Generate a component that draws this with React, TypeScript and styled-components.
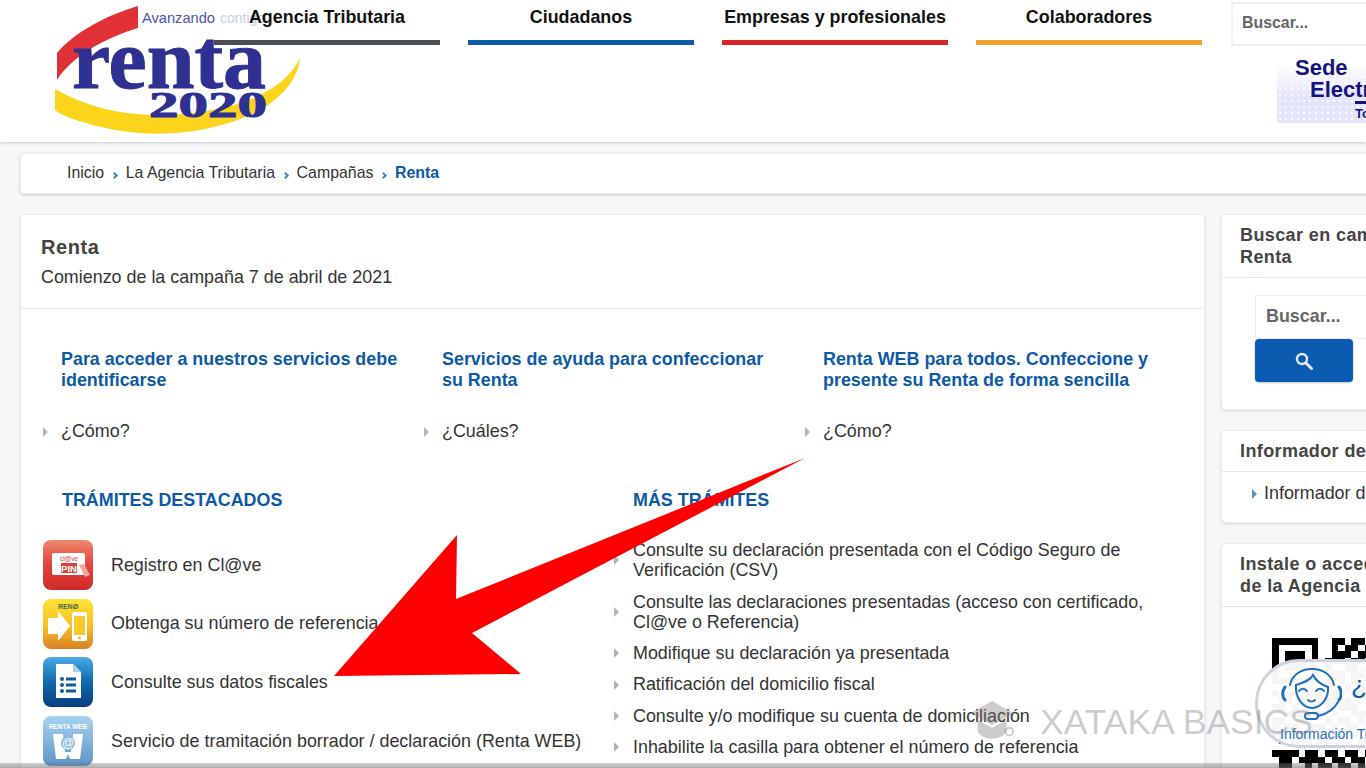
import React from "react";
import styled, { createGlobalStyle } from "styled-components";

const GlobalStyle = createGlobalStyle`
  html, body { margin: 0; padding: 0; background: #f6f7f8; }
  body { font-family: "Liberation Sans", Arial, sans-serif; color: #333; }
  * { box-sizing: border-box; }
`;

const Page = styled.div`
  position: relative;
  width: 1366px;
  height: 768px;
  overflow: hidden;
  background: #f6f7f8;
`;

/* header */
const Header = styled.header`
  display: flex;
  align-items: flex-start;
  height: 142px;
  background: #fff;
  box-shadow: 0 1px 3px rgba(0, 0, 0, 0.2);
`;

const LogoSlot = styled.div`
  flex: none;
  width: 246px;
  margin: 5px -87px 0 55px;
`;

const Nav = styled.nav`
  position: relative;
  display: flex;
  flex: none;
  gap: 28px;
`;

const NavItem = styled.a<{ $color: string }>`
  display: block;
  width: 226px;
  height: 45px;
  padding-top: 7px;
  border-bottom: 5px solid ${(p) => p.$color};
  color: #111;
  font-size: 17.9px;
  font-weight: bold;
  line-height: 21px;
  text-align: center;
`;

const HeaderRight = styled.div`
  flex: none;
  width: 300px;
  margin-left: 29px;
  padding-top: 2px;
`;

const TopSearch = styled.div`
  height: 44px;
  padding-left: 9px;
  border: 2px solid #f0f0f0;
  color: #666;
  font-size: 15.9px;
  font-weight: bold;
  line-height: 38px;
`;

const SedeBadge = styled.div`
  width: 200px;
  height: 67px;
  margin: 10px 0 0 46px;
  padding: 1px 0 0 18px;
  border-radius: 4px;
  background-color: #e4e4fb;
  background-image: linear-gradient(#fff 12%, rgba(255, 255, 255, 0) 62%),
    radial-gradient(circle, #fbfbff 1.3px, transparent 1.5px);
  background-size: 100% 100%, 6px 6px;
  color: #14147f;
  font-weight: bold;
`;

const SedeLine = styled.div<{ $indent: number; $size: number }>`
  padding-left: ${(p) => p.$indent}px;
  font-size: ${(p) => p.$size}px;
  line-height: ${(p) => p.$size}px;
  white-space: nowrap;
`;

const SedeRule = styled.div`
  width: 40px;
  height: 3px;
  margin: 0 0 3px 60px;
  background: #14147f;
`;

/* breadcrumb */
const Crumbs = styled.div`
  display: flex;
  align-items: center;
  gap: 7.8px;
  width: 1400px;
  height: 41px;
  margin: 11px 0 0 20px;
  padding: 0 0 2px 46px;
  border: 1px solid #eee;
  border-radius: 4px;
  background: #fff;
  box-shadow: 0 1px 3px rgba(0, 0, 0, 0.2);
  font-size: 15.9px;
`;

const CrumbSep = styled.span`
  width: 5px;
  height: 5px;
  margin: 5px 1px 0 0;
  border-top: 2px solid #3b8ec2;
  border-right: 2px solid #3b8ec2;
  transform: rotate(45deg);
`;

const CrumbCurrent = styled.b`
  color: #0b5aa5;
`;

/* main */
const Columns = styled.div`
  display: flex;
  gap: 16px;
  width: 1600px;
  margin: 20px 0 0 20px;
  align-items: flex-start;
`;

const Card = styled.section`
  border: 1px solid #ececec;
  border-radius: 5px;
  background: #fff;
  box-shadow: 0 1px 3px rgba(0, 0, 0, 0.12);
`;

const MainCard = styled(Card)`
  flex: none;
  width: 1185px;
  height: 620px;
`;

const MainHead = styled.div`
  height: 94px;
  padding: 20px 20px 0;
  border-bottom: 1px solid #e6e6e6;
`;

const MainTitle = styled.h1`
  margin: 0;
  color: #444;
  font-size: 20px;
  letter-spacing: 0.6px;
  line-height: 24px;
`;

const MainSub = styled.p`
  margin: 7px 0 0;
  font-size: 17.9px;
  line-height: 22px;
`;

const Promos = styled.div`
  display: grid;
  grid-template-columns: repeat(3, 381px);
  padding: 40px 0 0 40px;
`;

const PromoTitle = styled.h2`
  margin: 0;
  width: 345px;
  height: 62px;
  color: #0b5aa5;
  font-size: 17.9px;
  line-height: 21px;
`;

const PromoLink = styled.a`
  position: relative;
  display: block;
  margin-top: 10px;
  font-size: 17.9px;
  line-height: 21px;
`;

const Arrow = styled.span<{ $left: number; $color?: string }>`
  position: absolute;
  left: ${(p) => p.$left}px;
  top: 50%;
  margin-top: -5px;
  border-left: 5px solid ${(p) => p.$color ?? "#aeb4b8"};
  border-top: 5px solid transparent;
  border-bottom: 5px solid transparent;
`;

const Lower = styled.div`
  display: flex;
  padding: 48px 0 0 22px;
`;

const LeftCol = styled.div`
  flex: none;
  width: 590px;
`;

const RightCol = styled.div`
  flex: none;
  width: 540px;
`;

const SectionTitle = styled.h3`
  margin: 0;
  padding-left: 19px;
  color: #0b5aa5;
  font-size: 17.9px;
  line-height: 21px;
`;

const RightTitle = styled(SectionTitle)`
  padding-left: 0;
`;

const TaskList = styled.div`
  display: flex;
  flex-direction: column;
  gap: 8.7px;
  margin-top: 29px;
`;

const Task = styled.a`
  display: flex;
  align-items: center;
  gap: 18px;
  height: 50px;
  font-size: 17.9px;
  white-space: nowrap;
`;

const MoreList = styled.div`
  display: flex;
  flex-direction: column;
  gap: 10.8px;
  margin-top: 29px;
`;

const MoreItem = styled.a`
  position: relative;
  display: block;
  font-size: 17.9px;
  line-height: 20.4px;
`;

/* sidebar */
const Sidebar = styled.aside`
  display: flex;
  flex: none;
  flex-direction: column;
  gap: 20px;
  width: 300px;
`;

const SideHead = styled.div`
  padding: 9px 18px 9px;
  border-bottom: 1px solid #e6e6e6;
  color: #444;
  font-size: 18px;
  font-weight: bold;
  letter-spacing: 0.4px;
  line-height: 22px;
  white-space: nowrap;
`;

const SideSearch = styled.div`
  height: 131px;
  padding: 17px 0 0 33px;
`;

const SideInput = styled.div`
  height: 44px;
  padding-left: 10px;
  border: 1px solid #eee;
  color: #666;
  font-size: 17.9px;
  font-weight: bold;
  line-height: 40px;
`;

const SideButton = styled.div`
  display: flex;
  align-items: center;
  justify-content: center;
  width: 98px;
  height: 43px;
  border-radius: 4px;
  background: #0b5cb0;
  box-shadow: 0 1px 2px rgba(0, 0, 0, 0.25);
`;

const SideLink = styled.a`
  position: relative;
  display: block;
  height: 21px;
  margin: 11px 0 18px 42px;
  font-size: 17.9px;
  line-height: 21px;
  white-space: nowrap;
`;

const QrCard = styled(Card)`
  height: 260px;
`;

const QrBox = styled.div`
  padding: 31px 0 0 50px;
`;

/* things lying over the page */
const ArrowOverlay = styled.svg`
  position: absolute;
  left: 0;
  top: 0;
`;

const HelpBubble = styled.div`
  position: absolute;
  left: 1255px;
  top: 659px;
  width: 200px;
  height: 89px;
  padding: 6px 0 0 22px;
  border: 3px solid #cdd3de;
  border-radius: 44px;
  background: rgba(255, 255, 255, 0.96);
`;

const HelpTop = styled.div`
  display: flex;
  gap: 9px;
  height: 52px;
  color: #0b5cb0;
  font-size: 26px;
  line-height: 34px;
`;

const HelpLabel = styled.div`
  margin: 6px 0 0 0;
  color: #1f6fbe;
  font-size: 14px;
  line-height: 16px;
  white-space: nowrap;
`;

const Watermark = styled.div`
  position: absolute;
  left: 970px;
  top: 700px;
  display: flex;
  align-items: center;
  gap: 24px;
  color: rgba(120, 120, 120, 0.38);
  font-size: 35.500px;
  line-height: 42px;
  white-space: nowrap;
`;

const BottomEdge = styled.div`
  position: absolute;
  left: 0;
  right: 0;
  bottom: 0;
  height: 5px;
  background: linear-gradient(rgba(120, 120, 120, 0.35), rgba(120, 120, 120, 0.6));
`;

const RentaLogo = () => (
  <svg width="246" height="130" viewBox="55 5 246 130">
    <path d="M138 6 L138 28 C105 38 72 56 57 80 L57 53 C75 32 105 16 138 6 Z" fill="#e03236" />
    <path d="M55 89 C85 106 120 115 155 115 C215 115 280 100 300 58 C298 85 270 112 225 124 C190 135 150 136 115 130 C90 125 65 118 55 110 Z" fill="#fdd41c" />
    <text x="72" y="88" fontFamily="Liberation Serif" fontWeight="bold" fontSize="84" fill="#2e3192" stroke="#2e3192" strokeWidth="1" textLength="194" lengthAdjust="spacingAndGlyphs">renta</text>
    <text x="149" y="117" fontFamily="Liberation Serif" fontWeight="bold" fontSize="36" fill="#2e3192" stroke="#2e3192" strokeWidth="1" textLength="118" lengthAdjust="spacingAndGlyphs">2020</text>
    <text x="142" y="23" fontFamily="Liberation Sans" fontSize="14" fill="#4a55ad" textLength="73" lengthAdjust="spacingAndGlyphs">Avanzando</text>
    <text x="220" y="23" fontFamily="Liberation Sans" fontSize="14" fill="#c9cbec">contigo</text>
  </svg>
);

const SearchGlyph = () => (
  <svg width="18" height="18" viewBox="0 0 18 18" fill="none" stroke="#dfeaf6" strokeWidth="2.4">
    <circle cx="7" cy="7" r="5" />
    <path d="M11 11 L16.5 16.5" strokeWidth="3" strokeLinecap="round" />
  </svg>
);

const ClavePinIcon = () => (
  <svg width="50" height="50" viewBox="0 0 50 50">
    <defs>
      <linearGradient id="redGrad" x1="0" y1="0" x2="0" y2="1">
        <stop offset="0" stopColor="#ee8a6c" />
        <stop offset="0.5" stopColor="#e2433a" />
        <stop offset="1" stopColor="#cf2a2a" />
      </linearGradient>
    </defs>
    <rect width="50" height="50" rx="8" fill="url(#redGrad)" />
    <rect x="9" y="13" width="33" height="22" rx="2" fill="#fff" />
    <rect x="18" y="23" width="16" height="10" fill="#d8403a" />
    <text x="26" y="21" textAnchor="middle" fontFamily="Liberation Sans" fontSize="6.500" fill="#d8403a">cl@ve</text>
    <text x="26" y="32" textAnchor="middle" fontFamily="Liberation Sans" fontWeight="bold" fontSize="9.500" fill="#fff">PIN</text>
    <path d="M36 25 L41 24 L47 35 L42 37 Z" fill="#e9a99d" />
  </svg>
);

const RenoIcon = () => (
  <svg width="50" height="50" viewBox="0 0 50 50">
    <defs>
      <linearGradient id="yellowGrad" x1="0" y1="0" x2="0" y2="1">
        <stop offset="0" stopColor="#fde233" />
        <stop offset="0.55" stopColor="#f8c023" />
        <stop offset="1" stopColor="#d97f27" />
      </linearGradient>
    </defs>
    <rect width="50" height="50" rx="8" fill="url(#yellowGrad)" />
    <text x="25" y="10" textAnchor="middle" fontFamily="Liberation Sans" fontWeight="bold" fontSize="7" fill="#3f6f4a">RENØ</text>
    <path d="M5 19 H15 V12 L27 27 L15 42 V35 H5 Z" fill="#fff" />
    <rect x="29" y="13" width="15" height="29" rx="2" fill="#fff" />
    <rect x="31" y="17" width="11" height="19" fill="#fbc82b" />
    <circle cx="36.500" cy="39" r="1.300" fill="#e6a92a" />
  </svg>
);

const DatosIcon = () => (
  <svg width="50" height="50" viewBox="0 0 50 50">
    <defs>
      <linearGradient id="blueGrad" x1="0" y1="0" x2="0" y2="1">
        <stop offset="0" stopColor="#4aa9e6" />
        <stop offset="0.5" stopColor="#0f69ae" />
        <stop offset="1" stopColor="#083f7e" />
      </linearGradient>
    </defs>
    <rect width="50" height="50" rx="8" fill="url(#blueGrad)" />
    <path d="M13 7 H30 L38 15 V41 H13 Z" fill="#fff" />
    <path d="M30 7 L38 15 H30 Z" fill="#a9cfe9" />
    <g fill="#0d5c9f">
      <circle cx="19" cy="22" r="2" />
      <circle cx="19" cy="28" r="2" />
      <circle cx="19" cy="34" r="2" />
      <rect x="23" y="20.500" width="10" height="3" />
      <rect x="23" y="26.500" width="10" height="3" />
      <rect x="23" y="32.500" width="10" height="3" />
    </g>
  </svg>
);

const RentaWebIcon = () => (
  <svg width="50" height="50" viewBox="0 0 50 50">
    <defs>
      <linearGradient id="skyGrad" x1="0" y1="0" x2="0" y2="1">
        <stop offset="0" stopColor="#a6d2ee" />
        <stop offset="1" stopColor="#5b94c9" />
      </linearGradient>
    </defs>
    <rect width="50" height="50" rx="8" fill="url(#skyGrad)" />
    <text x="25" y="13" textAnchor="middle" fontFamily="Liberation Sans" fontWeight="bold" fontSize="6.500" fill="#fff">RENTA WEB</text>
    <path d="M10 18 H20 L22 36 H28 L30 18 H40 L37 43 H27 L25 38 L23 43 H13 Z" fill="#fff" />
    <circle cx="25" cy="27" r="7" fill="#8fbde0" />
    <text x="25" y="31" textAnchor="middle" fontFamily="Liberation Sans" fontSize="12" fill="#fff">@</text>
  </svg>
);

// modules of the QR code, rows top to bottom
const qrRows = [
  "1111111001101101",
  "1000001001011011",
  "1011101001110110",
  "1011101011101101",
  "1011101010011010",
  "1000001001101101",
  "1111111010101011",
  "0000000010010110",
  "1011011001101101",
  "0110100111010010",
  "1101011010111001",
  "0011101101001110",
  "1100110010110101",
  "1011001101011010",
  "1110110011101001",
  "0101010110010111",
  "0000000000000000",
  "1111011011011010",
  "0110111101101101",
  "0110010110110100",
];

const QrCode = () => (
  <svg width="106" height="132" viewBox="0 0 16 20" shapeRendering="crispEdges">
    {qrRows.map((row, y) =>
      row.split("").map((cell, x) =>
        cell === "1" ? <rect key={`${x}-${y}`} x={x} y={y} width="1" height="1" fill="#000" /> : null
      )
    )}
  </svg>
);

const AgentIcon = () => (
  <svg width="62" height="52" viewBox="0 0 62 52" fill="none" stroke="#1f6fbe" strokeWidth="2" strokeLinecap="round">
    <path d="M10 17 C12 7 21 1 32 1 C43 1 52 7 54 17" />
    <path d="M16 17 C22 15 30 13 33 7 C36 13 42 17 48 19" />
    <path d="M16 17 C15 30 23 40 32 40 C41 40 49 30 48 19" />
    <path d="M19 23 C21 20 25 20 27 23 M36 23 C38 20 42 20 44 23" />
    <path d="M28 32 C30 34 33 34 35 32" />
    <path d="M5 19 C2 23 2 29 5 32" strokeWidth="3" />
    <path d="M59 19 C62 23 62 29 59 32" strokeWidth="3" />
    <path d="M58 34 C54 42 46 46 38 48" />
    <rect x="25" y="45" width="13" height="6" rx="3" />
  </svg>
);

const GradCapIcon = () => (
  <svg width="46" height="44" viewBox="0 0 48 44" fill="rgba(120,120,120,0.38)">
    <path d="M23 0 L46 13 L23 25 L0 13 Z" />
    <path d="M8 20 L23 28 L38 20 V32 C32 42 14 42 8 32 Z" />
    <circle cx="41" cy="32" r="4" fill="none" stroke="rgba(120,120,120,0.38)" strokeWidth="2" />
  </svg>
);

const breadcrumbs = ["Inicio", "La Agencia Tributaria", "Campañas"];

const promos = [
  { title: "Para acceder a nuestros servicios debe identificarse", link: "¿Cómo?" },
  { title: "Servicios de ayuda para confeccionar su Renta", link: "¿Cuáles?" },
  { title: "Renta WEB para todos. Confeccione y presente su Renta de forma sencilla", link: "¿Cómo?" },
];

const moreTasks = [
  "Consulte su declaración presentada con el Código Seguro de Verificación (CSV)",
  "Consulte las declaraciones presentadas (acceso con certificado, Cl@ve o Referencia)",
  "Modifique su declaración ya presentada",
  "Ratificación del domicilio fiscal",
  "Consulte y/o modifique su cuenta de domiciliación",
  "Inhabilite la casilla para obtener el número de referencia",
];

export default function App() {
  return (
    <Page>
      <GlobalStyle />
      <Header>
        <LogoSlot>
          <RentaLogo />
        </LogoSlot>
        <Nav>
          <NavItem $color="#4a4f54">Agencia Tributaria</NavItem>
          <NavItem $color="#0b5aa5">Ciudadanos</NavItem>
          <NavItem $color="#d9252a">Empresas y profesionales</NavItem>
          <NavItem $color="#f0a12b">Colaboradores</NavItem>
        </Nav>
        <HeaderRight>
          <TopSearch>Buscar...</TopSearch>
          <SedeBadge>
            <SedeLine $indent={0} $size={22}>Sede</SedeLine>
            <SedeLine $indent={15} $size={22}>Electrónica</SedeLine>
            <SedeRule />
            <SedeLine $indent={60} $size={13}>Todos</SedeLine>
          </SedeBadge>
        </HeaderRight>
      </Header>

      <Crumbs>
        {breadcrumbs.map((crumb) => (
          <React.Fragment key={crumb}>
            <span>{crumb}</span>
            <CrumbSep />
          </React.Fragment>
        ))}
        <CrumbCurrent>Renta</CrumbCurrent>
      </Crumbs>

      <Columns>
        <MainCard>
          <MainHead>
            <MainTitle>Renta</MainTitle>
            <MainSub>Comienzo de la campaña 7 de abril de 2021</MainSub>
          </MainHead>
          <Promos>
            {promos.map((promo) => (
              <div key={promo.title}>
                <PromoTitle>{promo.title}</PromoTitle>
                <PromoLink>
                  <Arrow $left={-18} />
                  {promo.link}
                </PromoLink>
              </div>
            ))}
          </Promos>
          <Lower>
            <LeftCol>
              <SectionTitle>TRÁMITES DESTACADOS</SectionTitle>
              <TaskList>
                <Task><ClavePinIcon />Registro en Cl@ve</Task>
                <Task><RenoIcon />Obtenga su número de referencia</Task>
                <Task><DatosIcon />Consulte sus datos fiscales</Task>
                <Task><RentaWebIcon />Servicio de tramitación borrador / declaración (Renta WEB)</Task>
              </TaskList>
            </LeftCol>
            <RightCol>
              <RightTitle>MÁS TRÁMITES</RightTitle>
              <MoreList>
                {moreTasks.map((task) => (
                  <MoreItem key={task}>
                    <Arrow $left={-19} />
                    {task}
                  </MoreItem>
                ))}
              </MoreList>
            </RightCol>
          </Lower>
        </MainCard>

        <Sidebar>
          <Card>
            <SideHead>Buscar en campaña<br />Renta</SideHead>
            <SideSearch>
              <SideInput>Buscar...</SideInput>
              <SideButton><SearchGlyph /></SideButton>
            </SideSearch>
          </Card>
          <Card>
            <SideHead>Informador de Renta</SideHead>
            <SideLink>
              <Arrow $left={-12} $color="#5d93c4" />
              Informador de Renta
            </SideLink>
          </Card>
          <QrCard>
            <SideHead>Instale o acceda a la app<br />de la Agencia Tributaria</SideHead>
            <QrBox><QrCode /></QrBox>
          </QrCard>
        </Sidebar>
      </Columns>

      <ArrowOverlay width="1366" height="768" viewBox="0 0 1366 768">
        <polygon points="805,458 472,633 521,674 334,676 457,535 456,599" fill="#fe0000" />
      </ArrowOverlay>

      <HelpBubble>
        <HelpTop>
          <AgentIcon />
          <span>¿</span>
        </HelpTop>
        <HelpLabel>Información Tributaria</HelpLabel>
      </HelpBubble>

      <Watermark>
        <GradCapIcon />
        XATAKA BASICS
      </Watermark>
      <BottomEdge />
    </Page>
  );
}
